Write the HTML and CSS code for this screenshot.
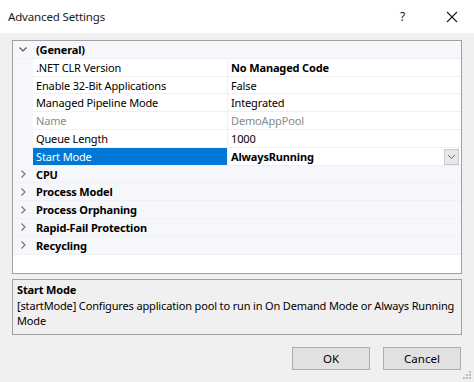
FILE: index.html
```html
<!DOCTYPE html>
<html lang="en">
<head>
    <meta charset="UTF-8">
    <title>Advanced Settings</title>
    <link rel="stylesheet" href="styles.css">
</head>
<body>

<div class="dialog">
    <div class="titlebar">
        <span class="title">Advanced Settings</span>
        <span class="help">?</span>
        <span class="close">
            <svg width="12" height="12" viewBox="0 0 12 12"><path d="M1 1 L11 11 M11 1 L1 11" stroke="#1a1a1a" stroke-width="1.1" fill="none"/></svg>
        </span>
    </div>

    <div class="content">
        <div class="grid">
            <div class="row category">
                <span class="toggle">
                    <svg width="10" height="10" viewBox="0 0 10 10"><path d="M1.5 3.5 L5 7 L8.5 3.5" stroke="#555" stroke-width="1.2" fill="none"/></svg>
                </span>
                <span class="cat-name">(General)</span>
            </div>
            <div class="row prop">
                <span class="gutter"></span>
                <span class="label">.NET CLR Version</span>
                <span class="value bold">No Managed Code</span>
            </div>
            <div class="row prop">
                <span class="gutter"></span>
                <span class="label">Enable 32-Bit Applications</span>
                <span class="value">False</span>
            </div>
            <div class="row prop">
                <span class="gutter"></span>
                <span class="label">Managed Pipeline Mode</span>
                <span class="value">Integrated</span>
            </div>
            <div class="row prop readonly">
                <span class="gutter"></span>
                <span class="label">Name</span>
                <span class="value">DemoAppPool</span>
            </div>
            <div class="row prop">
                <span class="gutter"></span>
                <span class="label">Queue Length</span>
                <span class="value">1000</span>
            </div>
            <div class="row prop selected">
                <span class="gutter"></span>
                <span class="label">Start Mode</span>
                <span class="value bold">AlwaysRunning
                    <span class="dropdown">
                        <svg width="9" height="6" viewBox="0 0 9 6"><path d="M1 1 L4.5 4.5 L8 1" stroke="#666" stroke-width="1" fill="none"/></svg>
                    </span>
                </span>
            </div>
            <div class="row category">
                <span class="toggle"><svg width="10" height="10" viewBox="0 0 10 10"><path d="M3.5 1.5 L7 5 L3.5 8.5" stroke="#777" stroke-width="1.2" fill="none"/></svg></span>
                <span class="cat-name">CPU</span>
            </div>
            <div class="row category">
                <span class="toggle"><svg width="10" height="10" viewBox="0 0 10 10"><path d="M3.5 1.5 L7 5 L3.5 8.5" stroke="#777" stroke-width="1.2" fill="none"/></svg></span>
                <span class="cat-name">Process Model</span>
            </div>
            <div class="row category">
                <span class="toggle"><svg width="10" height="10" viewBox="0 0 10 10"><path d="M3.5 1.5 L7 5 L3.5 8.5" stroke="#777" stroke-width="1.2" fill="none"/></svg></span>
                <span class="cat-name">Process Orphaning</span>
            </div>
            <div class="row category">
                <span class="toggle"><svg width="10" height="10" viewBox="0 0 10 10"><path d="M3.5 1.5 L7 5 L3.5 8.5" stroke="#777" stroke-width="1.2" fill="none"/></svg></span>
                <span class="cat-name">Rapid-Fail Protection</span>
            </div>
            <div class="row category">
                <span class="toggle"><svg width="10" height="10" viewBox="0 0 10 10"><path d="M3.5 1.5 L7 5 L3.5 8.5" stroke="#777" stroke-width="1.2" fill="none"/></svg></span>
                <span class="cat-name">Recycling</span>
            </div>
        </div>

        <div class="description">
            <div class="desc-title">Start Mode</div>
            <div class="desc-text">[startMode] Configures application pool to run in On Demand Mode or Always Running Mode</div>
        </div>

        <div class="buttons">
            <button class="btn">OK</button>
            <button class="btn">Cancel</button>
        </div>
    </div>

    <div class="grip">
        <svg width="10" height="10" viewBox="0 0 10 10">
            <rect x="7" y="1" width="2" height="2" fill="#bbb"/>
            <rect x="4" y="4" width="2" height="2" fill="#bbb"/>
            <rect x="7" y="4" width="2" height="2" fill="#bbb"/>
            <rect x="1" y="7" width="2" height="2" fill="#bbb"/>
            <rect x="4" y="7" width="2" height="2" fill="#bbb"/>
            <rect x="7" y="7" width="2" height="2" fill="#bbb"/>
        </svg>
    </div>
</div>

</body>
</html>
```

FILE: styles.css
```css
body {
    margin: 0;
    font-family: "Noto Sans", "Open Sans", sans-serif;
    font-size: 11px;
    letter-spacing: -0.15px;
    color: #000;
    background: #f0f0f0;
}

.dialog {
    position: relative;
    width: 474px;
    height: 382px;
    background: #f0f0f0;
    overflow: hidden;
}

.titlebar {
    display: flex;
    align-items: center;
    height: 33px;
    background: #ffffff;
    padding-left: 8px;
}

.title {
    flex: 1;
    font-size: 11.5px;
    color: #1a1a1a;
}

.help {
    width: 14px;
    margin-right: 32px;
    font-size: 12px;
    color: #1a1a1a;
}

.close {
    display: flex;
    width: 16px;
    margin-right: 12px;
}

.content {
    padding: 7px 12px 0 12px;
}

/* property grid */
.grid {
    height: 232px;
    border: 1px solid #a0a0a0;
    background: #ffffff;
}

.row {
    display: flex;
    height: 17.8px;
    line-height: 18.4px;
    box-sizing: border-box;
}

.category {
    background: #f5f7fa;
    border-bottom: 1px solid #eef0f3;
    font-weight: bold;
}

.toggle {
    display: flex;
    align-items: center;
    justify-content: center;
    width: 20px;
}

.cat-name {
    padding-left: 3px;
}

.prop .gutter {
    width: 20px;
    background: #f5f7fa;
}

.prop .label {
    width: 195px;
    padding-left: 3px;
    box-sizing: border-box;
    border-bottom: 1px solid #f0f0f0;
    border-right: 1px solid #f0f0f0;
    white-space: nowrap;
}

.prop .value {
    flex: 1;
    position: relative;
    padding-left: 3px;
    border-bottom: 1px solid #f0f0f0;
    white-space: nowrap;
}

.bold {
    font-weight: bold;
}

.readonly .label,
.readonly .value {
    color: #8a8a8a;
}

.selected .label {
    background: #0078d7;
    color: #ffffff;
}

.dropdown {
    position: absolute;
    right: 2px;
    top: 1px;
    width: 13px;
    height: 14px;
    background: #e8e8e8;
    border: 1px solid #c8c8c8;
    display: flex;
    align-items: center;
    justify-content: center;
}

/* description panel */
.description {
    margin-top: 5px;
    height: 52px;
    border: 1px solid #a0a0a0;
    background: #f0f0f0;
    padding: 2px 4px 0 4px;
    line-height: 15.5px;
}

.desc-title {
    font-weight: bold;
}

.buttons {
    display: flex;
    justify-content: flex-end;
    gap: 13px;
    margin-top: 12px;
    padding-right: 1px;
}

.btn {
    width: 78px;
    height: 23px;
    background: #e1e1e1;
    border: 1px solid #adadad;
    font-family: "Noto Sans", "Open Sans", sans-serif;
    font-size: 11.5px;
    color: #000;
    padding: 0;
}

.grip {
    position: absolute;
    right: 2px;
    bottom: 2px;
    display: flex;
}
```
